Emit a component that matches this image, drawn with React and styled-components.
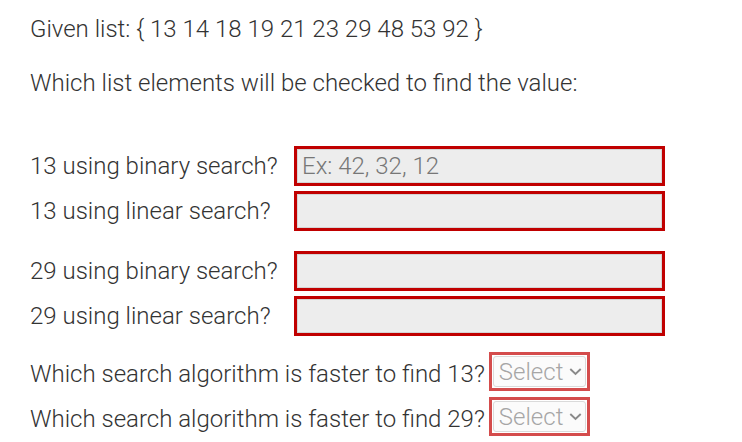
import React from "react";
import styled, { createGlobalStyle } from "styled-components";

const Global = createGlobalStyle`
  html, body { margin: 0; padding: 0; background: #fff; }
  body { font-family: Roboto, "Liberation Sans", sans-serif; color: #333; font-size: 24px; font-weight: 300; }
`;

const Page = styled.div`
  padding: 12px 0 0 30px;
  width: 742px;
  box-sizing: border-box;
`;

const Para = styled.p`
  margin: 0 0 ${(p) => p.$mb || 0}px;
  line-height: 34px;
`;

const Grid = styled.div`
  display: grid;
  grid-template-columns: 264px 371px;
  row-gap: 5px;
  align-items: center;
  margin-bottom: ${(p) => p.$mb || 0}px;
`;

const Label = styled.label`
  line-height: 28px;
`;

const TextInput = styled.input`
  box-sizing: border-box;
  width: 371px;
  height: 40px;
  border: 3px solid #c00000;
  box-shadow: inset 0 0 0 1px #d4d4d4;
  background: #ededed;
  font-family: Roboto, "Liberation Sans", sans-serif;
  font-weight: 300;
  font-size: 24px;
  color: #333;
  padding: 0 5px;
  outline: none;
  &::placeholder { color: #777; }
`;

const QRow = styled.div`
  display: flex;
  align-items: baseline;
  gap: 4px;
  margin-bottom: 6px;
`;

const QText = styled.span`
  line-height: 28px;
  position: relative;
  top: 2px;
`;

const SelectBox = styled.div`
  box-sizing: border-box;
  width: 101px;
  height: 39px;
  border: 3px solid #d44c4c;
  padding: 1px;
  display: flex;
`;

const SelectInner = styled.div`
  flex: 1;
  border: 1px solid #dadada;
  border-radius: 3px;
  background: #fbfbfb;
  display: flex;
  align-items: center;
  justify-content: space-between;
  padding: 0 3px 0 5px;
  color: #a6a6a6;
  font-size: 24px;
  line-height: 28px;
`;

const Chevron = () => (
  <svg width="13" height="9" viewBox="0 0 13 9">
    <path d="M1.3 2 L6.5 7 L11.7 2" fill="none" stroke="#8a8a8a" strokeWidth="1.9" />
  </svg>
);

const Select = () => (
  <SelectBox>
    <SelectInner>
      <span>Select</span>
      <Chevron />
    </SelectInner>
  </SelectBox>
);

export default function App() {
  return (
    <Page>
      <Global />
      <Para $mb={20}>Given list: {"{"} 13 14 18 19 21 23 29 48 53 92 {"}"}</Para>
      <Para $mb={46}>Which list elements will be checked to find the value:</Para>
      <Grid $mb={20}>
        <Label>13 using binary search?</Label>
        <TextInput placeholder="Ex: 42, 32, 12" />
        <Label>13 using linear search?</Label>
        <TextInput />
      </Grid>
      <Grid $mb={16}>
        <Label>29 using binary search?</Label>
        <TextInput />
        <Label>29 using linear search?</Label>
        <TextInput />
      </Grid>
      <QRow>
        <QText>Which search algorithm is faster to find 13?</QText>
        <Select />
      </QRow>
      <QRow>
        <QText>Which search algorithm is faster to find 29?</QText>
        <Select />
      </QRow>
    </Page>
  );
}
